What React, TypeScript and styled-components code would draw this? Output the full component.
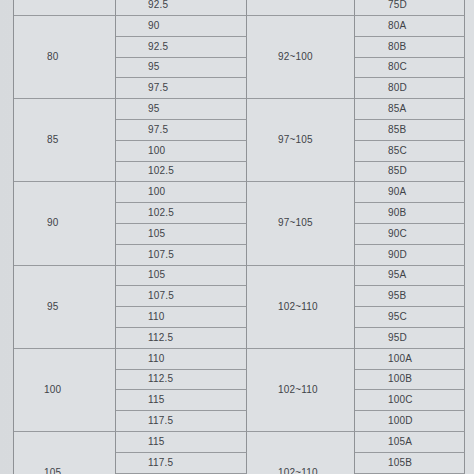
import React from 'react';
import styled, { createGlobalStyle } from 'styled-components';

const GlobalStyle = createGlobalStyle`
  html, body {
    margin: 0;
    padding: 0;
    background: #d8dbde;
  }
  body {
    font-family: "Liberation Sans", Arial, sans-serif;
  }
`;

const Page = styled.div`
  width: 474px;
  height: 474px;
  overflow: hidden;
  background: linear-gradient(90deg, #d7dadd 0%, #dcdee1 40%, #dcdfe2 100%);
  padding-left: 13px;
  box-sizing: border-box;
`;

const Grid = styled.div`
  display: grid;
  grid-template-columns: 102px 131px 108px 110px;
  grid-auto-rows: 20.8px;
  margin-top: -4.8px;
  border-left: 1px solid #8e9195;
  width: max-content;
  background: #dde0e3;
`;

const Cell = styled.div<{ $span?: number; $pad?: number }>`
  grid-row: span ${(p) => p.$span ?? 1};
  box-sizing: border-box;
  border-right: 1px solid #8f9296;
  border-bottom: 1px solid #979a9e;
  display: flex;
  align-items: center;
  padding-left: ${(p) => p.$pad ?? 32}px;
  padding-bottom: 1px;
  font-size: 10px;
  letter-spacing: 0.2px;
  color: #404348;
`;

type Group = {
  band: number;
  bust: string[];
  hip: string;
  cups: string[];
};

const groups: Group[] = [
  { band: 80, bust: ['90', '92.5', '95', '97.5'], hip: '92~100', cups: ['80A', '80B', '80C', '80D'] },
  { band: 85, bust: ['95', '97.5', '100', '102.5'], hip: '97~105', cups: ['85A', '85B', '85C', '85D'] },
  { band: 90, bust: ['100', '102.5', '105', '107.5'], hip: '97~105', cups: ['90A', '90B', '90C', '90D'] },
  { band: 95, bust: ['105', '107.5', '110', '112.5'], hip: '102~110', cups: ['95A', '95B', '95C', '95D'] },
  { band: 100, bust: ['110', '112.5', '115', '117.5'], hip: '102~110', cups: ['100A', '100B', '100C', '100D'] },
  { band: 105, bust: ['115', '117.5', '120', '122.5'], hip: '102~110', cups: ['105A', '105B', '105C', '105D'] },
];

function App() {
  return (
    <>
      <GlobalStyle />
      <Page>
        <Grid>
          {/* tail of the 75 group, cut off by the top edge */}
          <Cell style={{ gridColumn: 1 }} />
          <Cell>92.5</Cell>
          <Cell />
          <Cell $pad={33}>75D</Cell>

          {groups.map((g) =>
            g.bust.map((b, i) => (
              <React.Fragment key={`${g.band}-${i}`}>
                {i === 0 && (
                  <Cell $span={4} $pad={g.band >= 100 ? 30 : 33} style={{ gridColumn: 1 }}>
                    {g.band}
                  </Cell>
                )}
                <Cell style={{ gridColumn: 2 }}>{b}</Cell>
                {i === 0 && (
                  <Cell $span={4} $pad={31} style={{ gridColumn: 3 }}>
                    {g.hip}
                  </Cell>
                )}
                <Cell $pad={33} style={{ gridColumn: 4 }}>
                  {g.cups[i]}
                </Cell>
              </React.Fragment>
            ))
          )}
        </Grid>
      </Page>
    </>
  );
}

export default App;
